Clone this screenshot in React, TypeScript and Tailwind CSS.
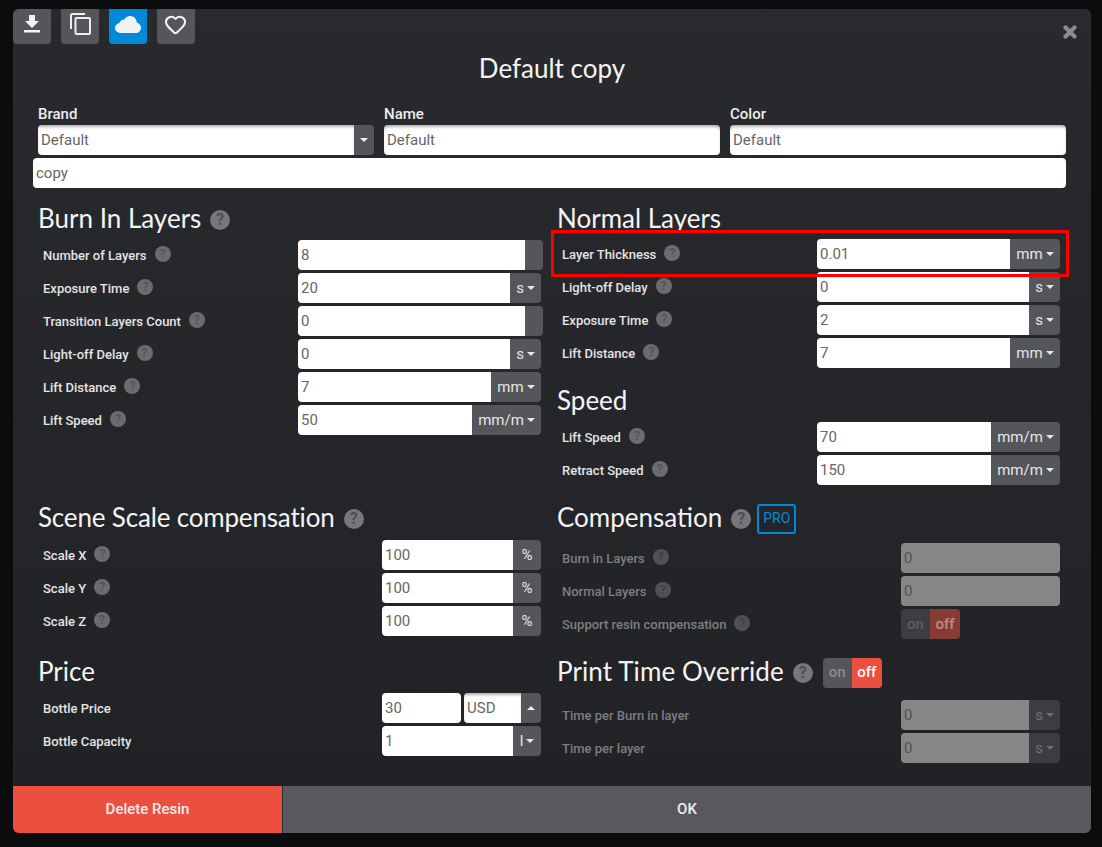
import { Heart } from "lucide-react"

const Caret = ({ up }: { up?: boolean }) => (
  <svg width="8" height="4" viewBox="0 0 8 4" className="shrink-0">
    <polygon points={up ? "0,4 8,4 4,0" : "0,0 8,0 4,4"} fill="currentColor" />
  </svg>
)

const Help = ({ big, dim }: { big?: boolean; dim?: boolean }) => (
  <span
    className={
      big
        ? "ml-[9px] mt-[3px] flex h-[20px] w-[20px] items-center justify-center rounded-full bg-[#77777a] text-[16px] font-bold text-[#4e4f52]"
        : dim
          ? "ml-[8px] mb-[2px] flex h-[16px] w-[16px] items-center justify-center rounded-full bg-[#505154] text-[13px] text-[#3f4043]"
          : "ml-[8px] mb-[2px] flex h-[16px] w-[16px] items-center justify-center rounded-full bg-[#6c6c6f] text-[13px] text-[#525356]"
    }
  >
    ?
  </span>
)

const Heading = ({ title, help, className, children }: { title: string; help?: boolean; className: string; children?: React.ReactNode }) => (
  <div className={"flex h-[30px] items-center " + className}>
    <h2 className="font-['Lato',sans-serif] text-[26px] font-normal leading-[30px] text-[#f4f4f4]">{title}</h2>
    {help && <Help big />}
    {children}
  </div>
)

const Row = ({ label, help = true, dim, children }: { label: string; help?: boolean; dim?: boolean; children: React.ReactNode }) => (
  <div className="flex h-[30px] items-center justify-between pl-[5px]">
    <div className={"flex items-center text-[13px] font-medium " + (dim ? "text-[#7d7e80]" : "text-[#e4e4e4]")}>
      <span className="pt-[2px]">{label}</span>
      {help && <Help dim={dim} />}
    </div>
    {children}
  </div>
)

// number box with optional unit on the right
const Field = ({ value, unit, width, addon, dim }: { value: string; unit?: string; width: string; addon?: string; dim?: boolean }) => (
  <div className={"flex h-[30px] overflow-hidden rounded-[4px] " + width}>
    <div className={"flex flex-1 items-center pl-[3px] text-[15px] " + (dim ? "bg-[#868686] text-[#525254]" : "bg-white text-[#666666]")}>{value}</div>
    {addon && (
      <div className={"flex items-center justify-center gap-[3px] text-[15px] " + addon + (dim ? " bg-[#3c3d41] text-[#6f7072]" : " bg-[#55565a] text-[#e6e6e6]")}>
        {unit}
        {unit !== "%" && unit && <Caret />}
      </div>
    )}
  </div>
)

const Toggle = ({ dim }: { dim?: boolean }) => (
  <div className="flex h-[30px] w-[59px] overflow-hidden rounded-[4px] text-[15px] font-medium">
    <div className={"flex w-[29px] items-center justify-center " + (dim ? "bg-[#3c3d41] text-[#5d5e61]" : "bg-[#55565a] text-[#8a8b8d]")}>on</div>
    <div className={"flex flex-1 items-center justify-center " + (dim ? "bg-[#873c33] text-[#b98f8a]" : "bg-[#eb4f3f] text-white")}>off</div>
  </div>
)

const TextBox = ({ value, className }: { value: string; className: string }) => (
  <div className={"flex h-[30px] items-center rounded-[4px] bg-white pl-[3px] text-[15px] text-[#666666] " + className}>{value}</div>
)

export default function App() {
  return (
    <div className="h-[847px] w-[1102px] overflow-hidden bg-[#0b0c0d] pl-[13px] pt-[9px] font-['Roboto',sans-serif]">
      <div className="relative flex h-[824px] w-[1078px] flex-col overflow-hidden rounded-[6px] bg-gradient-to-b from-[#292a2e] to-[#212226]">
        <div className="flex gap-[10px]">
          <div className="flex h-[35px] w-[38px] items-center justify-center rounded-b-[4px] bg-[#55565a] text-[#f2f2f2]">
            <svg width="16" height="18" viewBox="0 0 16 18" fill="currentColor" className="-mt-[6px]">
              <polygon points="5,0 11,0 11,6 15,6 8,13 1,6 5,6" />
              <rect x="0" y="15" width="16" height="2.5" />
            </svg>
          </div>
          <div className="flex h-[35px] w-[38px] items-center justify-center rounded-b-[4px] bg-[#55565a] text-[#eeeeee]">
            <svg width="21" height="22" viewBox="0 0 21 22" fill="none" stroke="currentColor" strokeWidth="2" className="-mt-[5px]">
              <path d="M1 16V2.5A1.5 1.5 0 0 1 2.5 1H15" />
              <rect x="5.5" y="5" width="14.5" height="16" rx="1" />
            </svg>
          </div>
          <div className="flex h-[35px] w-[38px] items-center justify-center rounded-b-[4px] bg-[#0089d6] text-[#f2f2f2]">
            <svg width="26" height="17" viewBox="0 0 26 17" fill="currentColor" className="-mt-[5px]">
              <path d="M6 17C2.6 17 0 14.8 0 12c0-2.5 1.8-4.4 4.4-4.9C5 4.6 7 3.2 9 3.8 10.3 1.5 12.5 0 15 0c3.7 0 6.6 2.8 6.8 6.4 2.4.7 4.2 2.9 4.2 5.3 0 3-2.4 5.3-5.5 5.3H6z" />
            </svg>
          </div>
          <div className="flex h-[35px] w-[38px] items-center justify-center rounded-b-[4px] bg-[#55565a] text-[#f2f2f2]">
            <Heart size={23} strokeWidth={2.2} className="-mt-[5px] -ml-[1px]" />
          </div>
        </div>

        <svg width="14" height="14" viewBox="0 0 14 14" stroke="#8b8c8e" strokeWidth="4.2" strokeLinecap="round" className="absolute right-[14px] top-[16px]">
          <path d="M2.5 2.5L11.5 11.5M11.5 2.5L2.5 11.5" />
        </svg>

        <h1 className="mt-[6px] h-[36px] text-center font-['Lato',sans-serif] text-[26px] font-normal leading-[36px] text-[#f4f4f4]">Default copy</h1>

        <div className="flex flex-col px-[25px]">
          <div className="mt-[18px] flex gap-[10px]">
            <div className="w-[336px]">
              <div className="h-[21px] text-[15px] font-medium leading-[20px] text-[#eeeeee]">Brand</div>
              <div className="flex h-[30px] overflow-hidden rounded-[4px]">
                <div className="flex flex-1 items-center bg-white pl-[3px] text-[15px] text-[#666666] shadow-[inset_0_3px_3px_-1px_rgba(0,0,0,0.3)]">Default</div>
                <div className="flex w-[20px] items-center justify-center bg-[#55565a] text-[#eeeeee]">
                  <Caret />
                </div>
              </div>
            </div>
            <div className="w-[336px]">
              <div className="h-[21px] text-[15px] font-medium leading-[20px] text-[#eeeeee]">Name</div>
              <TextBox value="Default" className="shadow-[inset_0_3px_3px_-1px_rgba(0,0,0,0.3)]" />
            </div>
            <div className="w-[336px]">
              <div className="h-[21px] text-[15px] font-medium leading-[20px] text-[#eeeeee]">Color</div>
              <TextBox value="Default" className="shadow-[inset_0_3px_3px_-1px_rgba(0,0,0,0.3)]" />
            </div>
          </div>
          <TextBox value="copy" className="mt-[3px] -ml-[5px]" />

          <div className="mt-[15px] flex gap-[16px]">
            <div className="flex w-[503px] flex-col">
              <Heading title="Burn In Layers" help className="mb-[7px]" />
              <div className="flex flex-col gap-[3px]">
                <Row label="Number of Layers">
                  <Field value="8" width="w-[245px] -mr-[2px]" addon="w-[18px]" />
                </Row>
                <Row label="Exposure Time">
                  <Field value="20" unit="s" width="w-[243px]" addon="w-[31px]" />
                </Row>
                <Row label="Transition Layers Count">
                  <Field value="0" width="w-[245px] -mr-[2px]" addon="w-[18px]" />
                </Row>
                <Row label="Light-off Delay">
                  <Field value="0" unit="s" width="w-[243px]" addon="w-[31px]" />
                </Row>
                <Row label="Lift Distance">
                  <Field value="7" unit="mm" width="w-[243px]" addon="w-[50px]" />
                </Row>
                <Row label="Lift Speed">
                  <Field value="50" unit="mm/m" width="w-[243px]" addon="w-[69px]" />
                </Row>
              </div>

              <Heading title="Scene Scale compensation" help className="mt-[67px] mb-[8px] tracking-[-0.17px]" />
              <div className="flex flex-col gap-[3px]">
                <Row label="Scale X">
                  <Field value="100" unit="%" width="w-[159px]" addon="w-[28px]" />
                </Row>
                <Row label="Scale Y">
                  <Field value="100" unit="%" width="w-[159px]" addon="w-[28px]" />
                </Row>
                <Row label="Scale Z">
                  <Field value="100" unit="%" width="w-[159px]" addon="w-[28px]" />
                </Row>
              </div>

              <Heading title="Price" className="mt-[20px] mb-[7px]" />
              <div className="flex flex-col gap-[3px]">
                <Row label="Bottle Price" help={false}>
                  <div className="flex w-[159px] gap-[3px]">
                    <TextBox value="30" className="w-[79px]" />
                    <div className="flex h-[30px] flex-1 overflow-hidden rounded-[4px]">
                      <div className="flex flex-1 items-center bg-white pl-[3px] text-[15px] text-[#666666] shadow-[inset_0_3px_3px_-1px_rgba(0,0,0,0.3)]">USD</div>
                      <div className="flex w-[20px] items-center justify-center bg-[#55565a] text-[#eeeeee]">
                        <Caret up />
                      </div>
                    </div>
                  </div>
                </Row>
                <Row label="Bottle Capacity" help={false}>
                  <Field value="1" unit="l" width="w-[159px]" addon="w-[28px]" />
                </Row>
              </div>
            </div>

            <div className="flex w-[503px] flex-col">
              <Heading title="Normal Layers" className="mb-[6px]" />
              <div className="flex flex-col gap-[3px]">
                <div className="relative">
                  <Row label="Layer Thickness">
                    <Field value="0.01" unit="mm" width="w-[243px]" addon="w-[50px]" />
                  </Row>
                  <div className="absolute -bottom-[8px] -left-[6px] -right-[9px] -top-[9px] z-10 border-[3px] border-[#ff0000]"></div>
                </div>
                <Row label="Light-off Delay">
                  <Field value="0" unit="s" width="w-[243px]" addon="w-[31px]" />
                </Row>
                <Row label="Exposure Time">
                  <Field value="2" unit="s" width="w-[243px]" addon="w-[31px]" />
                </Row>
                <Row label="Lift Distance">
                  <Field value="7" unit="mm" width="w-[243px]" addon="w-[50px]" />
                </Row>
              </div>

              <Heading title="Speed" className="mt-[17px] mb-[7px]" />
              <div className="flex flex-col gap-[3px]">
                <Row label="Lift Speed">
                  <Field value="70" unit="mm/m" width="w-[243px]" addon="w-[69px]" />
                </Row>
                <Row label="Retract Speed">
                  <Field value="150" unit="mm/m" width="w-[243px]" addon="w-[69px]" />
                </Row>
              </div>

              <Heading title="Compensation" help className="mt-[17px] mb-[11px]">
                <span className="ml-[6px] mt-[3px] flex h-[30px] w-[39px] items-center justify-center rounded-[3px] border-2 border-[#0089d6] text-[14px] text-[#0089d6]">PRO</span>
              </Heading>
              <div className="flex flex-col gap-[3px]">
                <Row label="Burn in Layers" dim>
                  <Field value="0" width="w-[159px]" dim />
                </Row>
                <Row label="Normal Layers" dim>
                  <Field value="0" width="w-[159px]" dim />
                </Row>
                <Row label="Support resin compensation" dim>
                  <div className="flex w-[159px]">
                    <Toggle dim />
                  </div>
                </Row>
              </div>

              <Heading title="Print Time Override" help className="mt-[17px] mb-[14px] tracking-[0.1px]">
                <div className="ml-[10px] mt-[3px] tracking-normal">
                  <Toggle />
                </div>
              </Heading>
              <div className="flex flex-col gap-[3px]">
                <Row label="Time per Burn in layer" help={false} dim>
                  <Field value="0" unit="s" width="w-[159px]" addon="w-[31px]" dim />
                </Row>
                <Row label="Time per layer" help={false} dim>
                  <Field value="0" unit="s" width="w-[159px]" addon="w-[31px]" dim />
                </Row>
              </div>
            </div>
          </div>
        </div>

        <div className="mt-auto flex h-[47px] text-[15px] font-medium text-[#eeeeee]">
          <div className="flex w-[269px] items-center justify-center bg-[#eb4f3f]">Delete Resin</div>
          <div className="w-[1px] bg-[#2c2d31]"></div>
          <div className="flex flex-1 items-center justify-center bg-[#58595d]">OK</div>
        </div>
      </div>
    </div>
  )
}
